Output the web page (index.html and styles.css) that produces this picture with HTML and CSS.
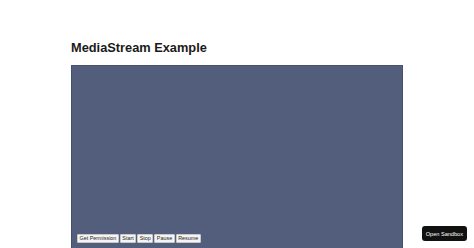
FILE: index.html
```html
<!DOCTYPE html>
<html lang="en">

<head>
    <meta charset="UTF-8">
    <meta name="viewport" content="width=device-width, initial-scale=1.0" />
    <title>MediaStream Example</title>
    <link rel="stylesheet" href="styles.css">
</head>

<body>
    <!-- Main Content -->
    <div class="container">
        <h1>MediaStream Example</h1>

        <!-- Video area with controls -->
        <div class="stage">
            <div class="controls">
                <button>Get Permission</button>
                <button>Start</button>
                <button>Stop</button>
                <button>Pause</button>
                <button>Resume</button>
            </div>
        </div>
    </div>

    <a class="sandbox-btn" href="#">Open Sandbox</a>
</body>

</html>
```
FILE: styles.css
```css
/* Reset some basic styles */
* {
    margin: 0;
    padding: 0;
    box-sizing: border-box;
}

body {
    font-family: 'Liberation Sans', Arial, sans-serif;
    background-color: #ffffff;
    overflow: hidden;
    height: 248px;
}

.container {
    width: 332px;
    margin: 0 auto;
    padding-top: 40px;
}

h1 {
    font-size: 12.8px;
    font-weight: bold;
    color: #1a1a1a;
    margin-bottom: 10px;
}

/* Video area */
.stage {
    height: 183px;
    background-color: #525e7b;
    border: 1px solid #45506a;
    border-bottom: none;
    border-radius: 1px 1px 0 0;
    display: flex;
    align-items: flex-end;
    padding: 0 5px 5px;
}

.controls {
    display: flex;
    gap: 1px;
}

.controls button {
    font-family: 'Liberation Sans', Arial, sans-serif;
    font-size: 5.4px;
    line-height: 7px;
    height: 9px;
    padding: 0 1.5px;
    background-color: #f4f4f4;
    color: #222;
    border: 1px solid #c8c8c8;
    border-radius: 1px;
}

/* Floating sandbox button */
.sandbox-btn {
    position: fixed;
    right: 7px;
    bottom: 7px;
    background-color: #111;
    color: #fff;
    font-size: 5.6px;
    text-decoration: none;
    padding: 4.5px 4px;
    border-radius: 3px;
}
```
